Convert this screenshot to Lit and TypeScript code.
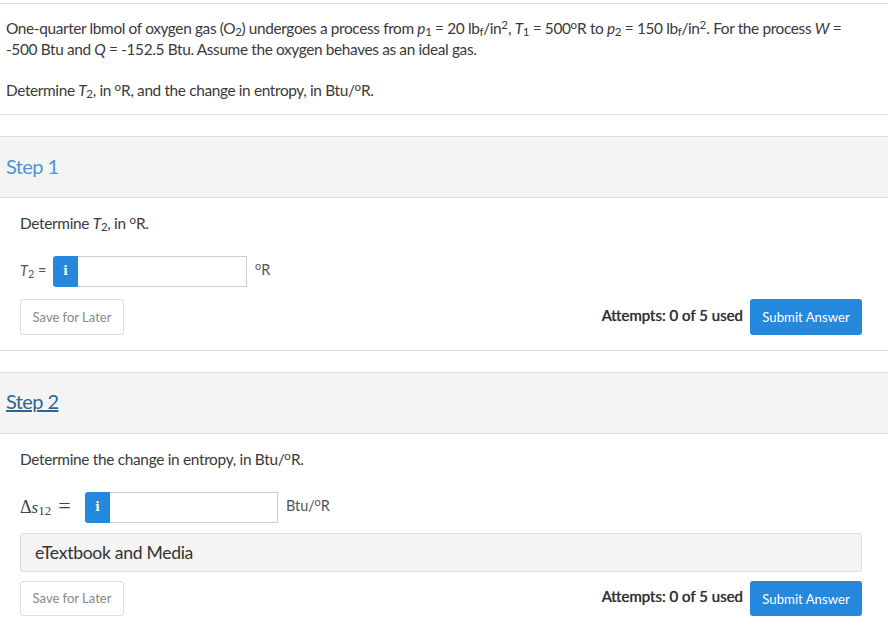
import { LitElement, html, css } from "lit";
import { customElement } from "lit/decorators.js";

@customElement("app-root")
export class AppRoot extends LitElement {
  static styles = css`
    :host { display: block; width: 888px; height: 628px; overflow: hidden; background: #fff; font-family: Lato, sans-serif; font-size: 15.4px; color: #3a3a3a; line-height: 21px; }
    i { font-style: italic; }
    sub, sup { font-size: 75%; line-height: 0; }
    sub { vertical-align: -0.2em; }
    sup { vertical-align: 0.45em; letter-spacing: 0; }
    .problem { margin-top: 3px; border-top: 1px solid #ddd; border-bottom: 1px solid #ddd; padding: 14px 6px 13px; height: 83px; box-sizing: content-box; letter-spacing: -0.36px; }
    .problem p { margin: 0; }
    .problem p + p { margin-top: 19px; position: relative; top: 1px; }
    .head { margin-top: 21px; height: 62px; box-sizing: border-box; border-top: 1px solid #ddd; border-bottom: 1px solid #ddd; background: #f4f4f4; display: flex; align-items: center; padding-left: 6px; padding-bottom: 2px; font-size: 20px; letter-spacing: -0.6px; color: #4f93d2; line-height: 19px; }
    .head.visited { color: #2f6690; text-decoration: underline; padding-bottom: 4px; }
    .body { padding: 15px 26px 15px 20px; border-bottom: 1px solid #ddd; }
    .body.last { border-bottom: none; padding-bottom: 0; }
    .q { height: 21px; letter-spacing: -0.31px; }
    .row { display: flex; align-items: center; margin-top: 22px; height: 31px; }
    .label { width: 33px; font-size: 14.5px; color: #555; position: relative; top: -1px; }
    .math { width: 65px; font-family: "Liberation Serif", serif; font-size: 18px; color: #444; }
    .math i { font-size: 17px; }
    .math sub { font-size: 13px; vertical-align: -0.15em; }
    .math .eq { margin-left: 7px; font-size: 22px; line-height: 0; }
    .info { width: 25px; height: 31px; box-sizing: border-box; background: #2488dc; color: #fff; border-radius: 3px 0 0 3px; display: flex; align-items: center; justify-content: center; font-family: "DejaVu Serif", serif; font-weight: bold; font-size: 12px; }
    .field { width: 169px; height: 31px; box-sizing: border-box; border: 1px solid #ccc; border-left: none; background: #fff; }
    .unit { margin-left: 8px; font-size: 14.5px; color: #555; letter-spacing: -0.1px; position: relative; top: -2px; }
    .last .field { width: 168px; }
    .actions { display: flex; align-items: center; justify-content: space-between; }
    .save { width: 104px; height: 36px; box-sizing: border-box; border: 1px solid #ddd; border-radius: 3px; background: #fff; color: #888; font-family: inherit; font-size: 13px; padding: 0; }
    .a2 .save, .a2 .submit { height: 35px; }
    .a2 .save { padding-bottom: 1px; }
    .right { display: flex; align-items: center; gap: 7px; }
    .attempts { font-size: 15px; font-weight: 400; color: #333; position: relative; top: -2px; text-shadow: 0 0 0.7px #333; }
    .submit { width: 112px; height: 36px; border: none; border-radius: 3px; background: #2488dc; color: #fff; font-family: inherit; font-size: 13.2px; padding: 0; }
    .a1 { margin-top: 12px; }
    .media { margin-top: 10px; height: 39px; box-sizing: border-box; background: #f4f4f4; border: 1px solid #ddd; border-radius: 3px; display: flex; align-items: center; padding: 0 0 1px 14px; font-size: 17.6px; letter-spacing: -0.32px; color: #333; }
    .a2 { margin-top: 9px; }
  `;

  private actions(cls: string) {
    return html`<div class="actions ${cls}">
      <button class="save">Save for Later</button>
      <div class="right">
        <span class="attempts">Attempts: 0 of 5 used</span>
        <button class="submit">Submit Answer</button>
      </div>
    </div>`;
  }

  render() {
    return html`
      <div class="problem">
        <p>One-quarter lbmol of oxygen gas (O<sub>2</sub>) undergoes a process from <i>p</i><sub>1</sub> = 20 lb<sub>f</sub>/in<sup>2</sup>, <i>T</i><sub>1</sub> = 500<sup>o</sup>R to <i>p</i><sub>2</sub> = 150 lb<sub>f</sub>/in<sup>2</sup>. For the process <i>W</i> =<br />-500 Btu and <i>Q</i> = -152.5 Btu. Assume the oxygen behaves as an ideal gas.</p>
        <p>Determine <i>T</i><sub>2</sub>, in <sup>o</sup>R, and the change in entropy, in Btu/<sup>o</sup>R.</p>
      </div>
      <div class="head">Step 1</div>
      <div class="body">
        <div class="q">Determine <i>T</i><sub>2</sub>, in <sup>o</sup>R.</div>
        <div class="row">
          <span class="label"><i>T</i><sub>2</sub> =</span>
          <span class="info">i</span><span class="field"></span>
          <span class="unit"><sup>o</sup>R</span>
        </div>
        ${this.actions("a1")}
      </div>
      <div class="head visited">Step 2</div>
      <div class="body last">
        <div class="q">Determine the change in entropy, in Btu/<sup>o</sup>R.</div>
        <div class="row">
          <span class="math">Δ<i>s</i><sub>12</sub><span class="eq">=</span></span>
          <span class="info">i</span><span class="field"></span>
          <span class="unit">Btu/<sup>o</sup>R</span>
        </div>
        <div class="media">eTextbook and Media</div>
        ${this.actions("a2")}
      </div>
    `;
  }
}
